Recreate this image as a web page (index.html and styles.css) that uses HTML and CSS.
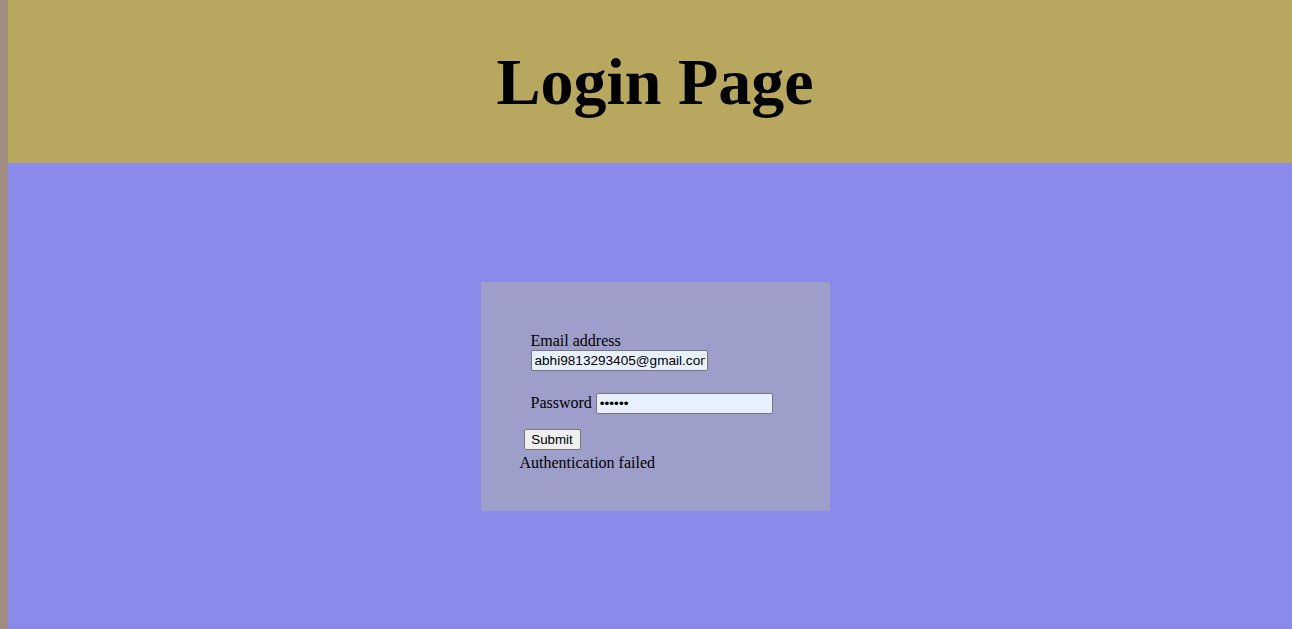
FILE: index.html
```html
<!DOCTYPE html>
<html lang="en">
<head>
<meta charset="utf-8">
<title>Login Page</title>
<link rel="stylesheet" href="styles.css">
</head>
<body>
<header class="page-header">
  <h1 class="title">Login Page</h1>
</header>
<main class="page-main">
  <form class="card">
    <div class="email-group">
      <label class="label" for="email">Email address</label>
      <input class="input" id="email" type="email" value="abhi9813293405@gmail.com">
    </div>
    <div class="password-group">
      <label class="label" for="password">Password</label>
      <input class="input" id="password" type="password" value="abcdef">
    </div>
    <button class="submit" type="button">Submit</button>
    <div class="status">Authentication failed</div>
  </form>
</main>
</body>
</html>
```
FILE: styles.css
```css
html {
  overflow: hidden;
  background: #a08c80;
}
body {
  margin: 0 0 0 8px;
  width: 1294px;
  height: 100vh;
  display: flex;
  flex-direction: column;
  font-family: "Liberation Serif", "Times New Roman", serif;
  font-size: 16px;
  color: #000;
}
.page-header {
  background: #b8a85f;
  padding: 44px 0;
  text-align: center;
}
.title {
  margin: 0;
  font-size: 66px;
  line-height: 75px;
  font-weight: bold;
}
.page-main {
  flex: 1;
  background: #8a8aea;
  display: flex;
  align-items: center;
  justify-content: center;
}
.card {
  box-sizing: border-box;
  width: 349px;
  padding: 39px;
  background: #9e9ecb;
}
.label {
  line-height: 18px;
}
.email-group {
  margin: 11px 0 0 11px;
}
.email-group .label {
  display: block;
}
.input {
  box-sizing: border-box;
  width: 177px;
  height: 21px;
  margin: 0;
  padding: 1px 2px 1px 3px;
  border: 1px solid #767676;
  border-radius: 2px;
  background: #e8f0fe;
  color: #000;
  font-family: "Liberation Sans", Arial, sans-serif;
  font-size: 13.6px;
  display: block;
}
.password-group {
  margin: 22px 0 0 11px;
  display: flex;
  align-items: center;
  gap: 4px;
}
.submit {
  display: block;
  box-sizing: border-box;
  width: 57px;
  height: 21px;
  margin: 15px 0 0 4px;
  padding: 1px 6px;
  border: 1px solid #767676;
  border-radius: 2px;
  background: #efefef;
  color: #000;
  font-family: "Liberation Sans", Arial, sans-serif;
  font-size: 13.33px;
}
.status {
  margin-top: 4px;
  line-height: 18px;
}
```
